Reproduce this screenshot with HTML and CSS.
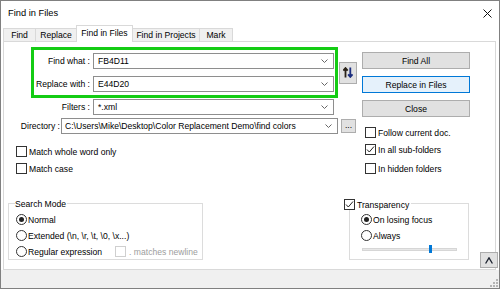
FILE: index.html
```html
<!DOCTYPE html>
<html>
<head>
<meta charset="utf-8">
<link rel="stylesheet" href="styles.css">
</head>
<body>
<div class="window">
  <div class="titlebar">
    <span class="title">Find in Files</span>
    <svg class="close" width="9" height="9" viewBox="0 0 9 9"><path d="M0.5 0.5L8.5 8.5M8.5 0.5L0.5 8.5" stroke="#111" stroke-width="1" fill="none"/></svg>
  </div>
  <div class="tabs">
    <div class="tab w-find">Find</div>
    <div class="tab w-replace">Replace</div>
    <div class="tab w-files active">Find in Files</div>
    <div class="tab w-projects">Find in Projects</div>
    <div class="tab w-mark">Mark</div>
  </div>
  <div class="panel">
    <div class="top">
      <div class="left">
        <div class="findrow">
          <div class="green">
            <div class="row">
              <span class="lbl lw56">Find what :</span>
              <div class="combo cw241"><span>FB4D11</span><svg class="chev" width="7" height="4" viewBox="0 0 7 4"><path d="M0.5 0.5L3.5 3.5L6.5 0.5" stroke="#666" fill="none"/></svg></div>
            </div>
            <div class="row">
              <span class="lbl lw56">Replace with :</span>
              <div class="combo cw241"><span>E44D20</span><svg class="chev" width="7" height="4" viewBox="0 0 7 4"><path d="M0.5 0.5L3.5 3.5L6.5 0.5" stroke="#666" fill="none"/></svg></div>
            </div>
          </div>
          <div class="swap">
            <svg width="10" height="11" viewBox="0 0 10 11">
              <path d="M2.5 10.5V1.4M0.3 3.6L2.5 1.1L4.7 3.6" stroke="#2a2218" stroke-width="1.8" fill="none"/>
              <path d="M7.3 0.5V9.6M5.1 7.4L7.3 9.9L9.5 7.4" stroke="#1b2d7e" stroke-width="1.8" fill="none"/>
            </svg>
          </div>
        </div>
        <div class="row filters">
          <span class="lbl lw56">Filters :</span>
          <div class="combo cw241"><span>*.xml</span><svg class="chev" width="7" height="4" viewBox="0 0 7 4"><path d="M0.5 0.5L3.5 3.5L6.5 0.5" stroke="#666" fill="none"/></svg></div>
        </div>
        <div class="row dir">
          <span class="lbl lw42">Directory :</span>
          <div class="combo cw277 dircombo"><span>C:\Users\Mike\Desktop\Color Replacement Demo\find colors</span><svg class="chev" width="7" height="4" viewBox="0 0 7 4"><path d="M0.5 0.5L3.5 3.5L6.5 0.5" stroke="#666" fill="none"/></svg></div>
          <div class="ellipsis">...</div>
        </div>
        <div class="check lc1"><span class="box"></span>Match whole word only</div>
        <div class="check lc2"><span class="box"></span>Match case</div>
      </div>
      <div class="right">
        <div class="btn b1">Find All</div>
        <div class="btn b2 default">Replace in Files</div>
        <div class="btn b3">Close</div>
        <div class="check rc1"><span class="box"></span>Follow current doc.</div>
        <div class="check rc2"><span class="box"><svg width="9" height="9" viewBox="0 0 9 9"><path d="M1 4.5L3.3 7L8 1.5" stroke="#222" stroke-width="1" fill="none"/></svg></span>In all sub-folders</div>
        <div class="check rc3"><span class="box"></span>In hidden folders</div>
      </div>
    </div>
    <div class="bottom">
      <div class="group search">
        <div class="gtitle">Search Mode</div>
        <div class="radio r1"><span class="rad on"></span>Normal</div>
        <div class="radio"><span class="rad"></span>Extended (\n, \r, \t, \0, \x...)</div>
        <div class="radio"><span class="rad"></span>Regular expression<span class="box disabled"></span><span class="muted">. matches newline</span></div>
      </div>
      <div class="group trans">
        <div class="gtitle"><span class="box"><svg width="9" height="9" viewBox="0 0 9 9"><path d="M1 4.5L3.3 7L8 1.5" stroke="#222" stroke-width="1" fill="none"/></svg></span>Transparency</div>
        <div class="radio t1"><span class="rad on"></span>On losing focus</div>
        <div class="radio t2"><span class="rad"></span>Always</div>
        <div class="track"><span class="thumb"></span></div>
      </div>
      <div class="caret">
        <svg width="8" height="7" viewBox="0 0 8 7"><path d="M0.6 6.5L4 0.8L7.4 6.5" stroke="#1d2330" stroke-width="1.3" fill="none"/></svg>
      </div>
    </div>
  </div>
  <div class="status">
    <svg class="grip" width="8" height="8" viewBox="0 0 8 8" fill="#b4b4b4">
      <rect x="6" y="0" width="2" height="2"/><rect x="3" y="3" width="2" height="2"/><rect x="6" y="3" width="2" height="2"/>
      <rect x="0" y="6" width="2" height="2"/><rect x="3" y="6" width="2" height="2"/><rect x="6" y="6" width="2" height="2"/>
    </svg>
  </div>
</div>
</body>
</html>
```

FILE: styles.css
```css
body {
  margin: 0;
  font-family: "Liberation Sans", Arial, sans-serif;
  font-size: 8.6px;
  color: #000;
  background: #fff;
}

.window {
  width: 500px;
  height: 289px;
  box-sizing: border-box;
  border: 1px solid #808080;
  display: flex;
  flex-direction: column;
  background: #fff;
  overflow: hidden;
}

.titlebar {
  height: 24px;
  flex-shrink: 0;
  display: flex;
  align-items: center;
  justify-content: space-between;
  padding: 0 7px 0 7px;
}

.title {
  font-size: 9.3px;
}

.close {
  display: block;
}

.tabs {
  height: 16px;
  flex-shrink: 0;
  display: flex;
  align-items: flex-end;
  padding-left: 2px;
}

.tab {
  height: 13px;
  box-sizing: border-box;
  border: 1px solid #d9d9d9;
  border-bottom: none;
  background: #f0f0f0;
  display: flex;
  align-items: center;
  justify-content: center;
  margin-left: -1px;
  line-height: 11px;
}

.tab:first-child {
  margin-left: 0;
}

.w-find { width: 33px; }
.w-replace { width: 42px; }
.w-files { width: 57px; }
.w-projects { width: 68px; }
.w-mark { width: 34px; }

.tab.active {
  height: 17px;
  background: #fff;
  margin-bottom: -1px;
  position: relative;
  z-index: 1;
  padding-bottom: 1px;
}

.panel {
  height: 229px;
  flex-shrink: 0;
  box-sizing: border-box;
  border: 1px solid #d9d9d9;
  margin: 0 3px 0 2px;
  background: #fff;
}

.top {
  display: flex;
}

.left {
  width: 353px;
  flex-shrink: 0;
}

.right {
  width: 108px;
  flex-shrink: 0;
  margin-left: 5px;
  display: flex;
  flex-direction: column;
}

.findrow {
  display: flex;
  align-items: center;
  margin: 5px 0 0 27px;
}

.green {
  width: 307px;
  height: 51px;
  box-sizing: border-box;
  border: 3px solid #14cc14;
  padding-top: 3px;
  display: flex;
  flex-direction: column;
  gap: 7px;
}

.row {
  display: flex;
  align-items: center;
  height: 16px;
}

.lbl {
  text-align: right;
  flex-shrink: 0;
  white-space: nowrap;
}

.lw56 {
  width: 56px;
  margin-right: 3px;
}

.lw42 {
  width: 43px;
  margin-right: 1px;
}

.combo {
  height: 16px;
  box-sizing: border-box;
  border: 1px solid #8e8e8e;
  background: #fff;
  display: flex;
  align-items: center;
  justify-content: space-between;
  padding: 0 5px 0 4px;
  flex-shrink: 0;
  white-space: nowrap;
}

.dircombo {
  padding-left: 3px;
}

.cw241 { width: 241px; }
.cw277 { width: 277px; }

.chev {
  display: block;
}

.swap {
  width: 18px;
  height: 22px;
  margin-left: 1px;
  box-sizing: border-box;
  border: 1px solid #adadad;
  background: #e1e1e1;
  display: flex;
  align-items: center;
  justify-content: center;
}

.filters {
  margin: 1px 0 0 30px;
}

.dir {
  margin: 3px 0 0 13px;
}

.ellipsis {
  width: 15px;
  height: 14px;
  box-sizing: border-box;
  border: 1px solid #adadad;
  background: #e1e1e1;
  margin-left: 3px;
  display: flex;
  align-items: center;
  justify-content: center;
  line-height: 8px;
  padding-bottom: 2px;
}

.check {
  display: flex;
  align-items: center;
  height: 11px;
  white-space: nowrap;
}

.box {
  width: 11px;
  height: 11px;
  box-sizing: border-box;
  border: 1px solid #333;
  background: #fff;
  margin-right: 2px;
  flex-shrink: 0;
  display: flex;
  align-items: center;
  justify-content: center;
}

.box svg {
  display: block;
}

.lc1 { margin: 12px 0 0 12px; }
.lc2 { margin: 6px 0 0 12px; }

.btn {
  height: 17px;
  box-sizing: border-box;
  border: 1px solid #adadad;
  background: #e1e1e1;
  display: flex;
  align-items: center;
  justify-content: center;
}

.btn.default {
  border-color: #0078d7;
  background: #e5f1fb;
}

.b1 { margin-top: 10px; }
.b2 { margin-top: 7px; }
.b3 { margin-top: 7px; }

.rc1 { margin: 10px 0 0 3px; }
.rc2 { margin: 6px 0 0 3px; }
.rc3 { margin: 8px 0 0 3px; }

.bottom {
  display: flex;
  align-items: flex-start;
  margin-top: 29px;
}

.group {
  box-sizing: border-box;
  border: 1px solid #dcdcdc;
  height: 57px;
  flex-shrink: 0;
}

.search {
  width: 195px;
  margin-left: 4px;
}

.trans {
  width: 120px;
  margin-left: 146px;
}

.gtitle {
  display: flex;
  align-items: center;
  height: 11px;
  background: #fff;
  width: fit-content;
  white-space: nowrap;
}

.search .gtitle {
  margin: -6px 0 0 6px;
  padding-right: 1px;
}

.trans .gtitle {
  margin: -5px 0 0 -6px;
  padding-right: 2px;
}

.radio {
  display: flex;
  align-items: center;
  height: 11px;
  margin: 5px 0 0 7px;
  white-space: nowrap;
}

.rad {
  width: 11px;
  height: 11px;
  box-sizing: border-box;
  border: 1px solid #333;
  border-radius: 50%;
  background: #fff;
  margin-right: 1px;
  flex-shrink: 0;
  display: flex;
  align-items: center;
  justify-content: center;
}

.rad.on::after {
  content: "";
  width: 5px;
  height: 5px;
  border-radius: 50%;
  background: #222;
}

.box.disabled {
  border-color: #cfcfcf;
  margin-left: 13px;
  margin-right: 3px;
}

.muted {
  color: #9d9d9d;
}

.trans .t1 {
  margin: 4px 0 0 11px;
}

.trans .t2 {
  margin: 5px 0 0 11px;
}

.track {
  position: relative;
  width: 95px;
  height: 3px;
  box-sizing: border-box;
  border: 1px solid #d6d6d6;
  background: #e7e7e7;
  margin: 7px 0 0 12px;
}

.thumb {
  position: absolute;
  left: 66px;
  top: -4px;
  width: 3px;
  height: 8px;
  background: #0078d7;
}

.caret {
  width: 18px;
  height: 16px;
  flex-shrink: 0;
  box-sizing: border-box;
  border: 1px solid #adadad;
  background: #e1e1e1;
  margin: 49px 0 0 11px;
  display: flex;
  align-items: center;
  justify-content: center;
}

.caret svg {
  display: block;
}

.status {
  flex: 1;
  background: #f0f0f0;
  display: flex;
  justify-content: flex-end;
  align-items: flex-end;
  padding: 0 1px 1px 0;
}

.grip {
  display: block;
}
```
